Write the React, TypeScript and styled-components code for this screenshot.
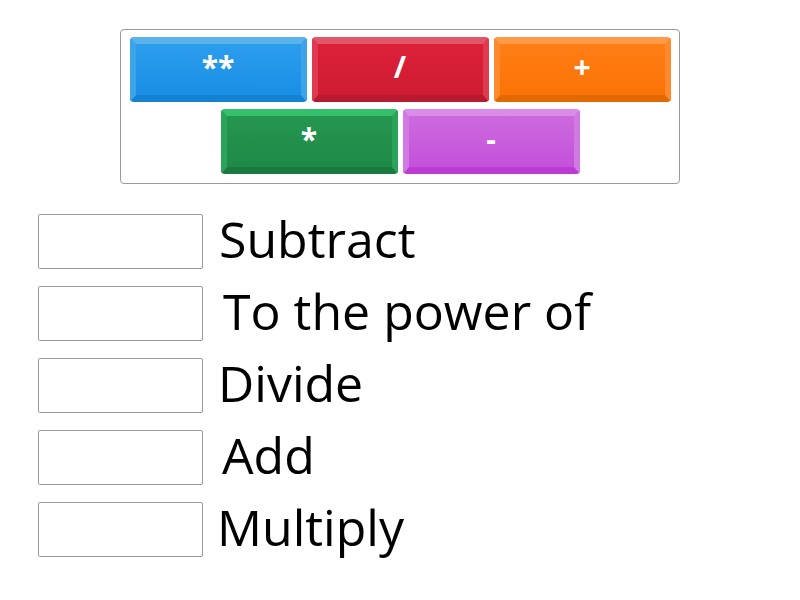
import { createGlobalStyle } from 'styled-components';
import styled from 'styled-components';

const GlobalStyle = createGlobalStyle`
  html, body {
    margin: 0;
    padding: 0;
    background: #ffffff;
    font-family: 'Open Sans', 'Noto Sans', sans-serif;
  }
`;

const Page = styled.div`
  width: 800px;
  height: 600px;
  padding-top: 29px;
  box-sizing: border-box;
`;

const Board = styled.div`
  width: 560px;
  height: 155px;
  margin: 0 auto;
  box-sizing: border-box;
  border: 1px solid #9a9a9a;
  border-radius: 4px;
  padding: 7px 8px 8px;
  display: flex;
  flex-wrap: wrap;
  justify-content: center;
  align-content: flex-start;
  column-gap: 5px;
  row-gap: 7px;
`;

type Tone = {
  top: string;
  side: string;
  bottom: string;
  faceTop: string;
  faceBottom: string;
};

const tones: Record<string, Tone> = {
  blue: { top: '#5ab3ea', side: '#3ea4ea', bottom: '#1482d3', faceTop: '#2c9ded', faceBottom: '#1a8fe5' },
  red: { top: '#e2566a', side: '#df3a4f', bottom: '#b71a2e', faceTop: '#dc2039', faceBottom: '#cf1c32' },
  orange: { top: '#ff9b48', side: '#ff8a2e', bottom: '#e26900', faceTop: '#ff7e16', faceBottom: '#fa7306' },
  green: { top: '#35c16b', side: '#2aa45a', bottom: '#1b7a40', faceTop: '#25964f', faceBottom: '#1f8a48' },
  purple: { top: '#da8de8', side: '#d27ae3', bottom: '#bb3bd4', faceTop: '#cd69de', faceBottom: '#c352da' },
};

const Tile = styled.div<{ $tone: Tone }>`
  width: 177px;
  height: 65px;
  box-sizing: border-box;
  border-radius: 4px;
  border-style: solid;
  border-width: 7px 6px 7px 6px;
  border-color: ${({ $tone }) => `${$tone.top} ${$tone.side} ${$tone.bottom} ${$tone.side}`};
  background: linear-gradient(${({ $tone }) => `${$tone.faceTop}, ${$tone.faceBottom}`});
  display: flex;
  align-items: center;
  justify-content: center;
  color: #ffffff;
  font-weight: 700;
  font-size: 30px;
  line-height: 1;
  padding-bottom: 5px;
  user-select: none;
`;

const Answers = styled.div`
  margin-top: 30px;
  padding-left: 38px;
  display: flex;
  flex-direction: column;
  gap: 17px;
`;

const Row = styled.div`
  display: flex;
  align-items: center;
  height: 55px;
`;

const Slot = styled.div`
  width: 165px;
  height: 55px;
  box-sizing: border-box;
  border: 1px solid #9a9a9a;
  border-radius: 2px;
  flex-shrink: 0;
`;

const Label = styled.div<{ $indent: number }>`
  margin-left: ${({ $indent }) => $indent}px;
  font-size: 50px;
  line-height: 1;
  color: #000000;
  padding-bottom: 6px;
`;

const tiles = [
  { text: '**', tone: tones.blue },
  { text: '/', tone: tones.red },
  { text: '+', tone: tones.orange },
  { text: '*', tone: tones.green },
  { text: '-', tone: tones.purple },
];

const rows = [
  { text: 'Subtract', indent: 16 },
  { text: 'To the power of', indent: 20 },
  { text: 'Divide', indent: 15 },
  { text: 'Add', indent: 19 },
  { text: 'Multiply', indent: 14 },
];

export default function App() {
  return (
    <>
      <GlobalStyle />
      <Page>
        <Board>
          {tiles.map((t) => (
            <Tile key={t.text} $tone={t.tone}>
              {t.text}
            </Tile>
          ))}
        </Board>
        <Answers>
          {rows.map((r) => (
            <Row key={r.text}>
              <Slot />
              <Label $indent={r.indent}>{r.text}</Label>
            </Row>
          ))}
        </Answers>
      </Page>
    </>
  );
}
